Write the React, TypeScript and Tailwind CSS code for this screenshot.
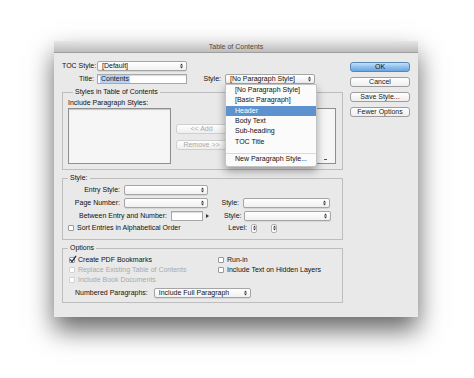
import React from 'react';

const Arrows = () => (
  <svg width="3" height="6" viewBox="0 0 3 6" className="shrink-0">
    <path d="M0 2.4 L1.5 0.4 L3 2.4Z M0 3.6 L1.5 5.6 L3 3.6Z" fill="#333" />
  </svg>
);

function Select({ w, children }: { w: string; children?: React.ReactNode }) {
  return (
    <div className={`flex h-[10px] items-center justify-between rounded-[2px] border border-[#a5a5a5] bg-gradient-to-b from-white to-[#f1f1f1] pl-[4px] pr-[3px] shadow-[0_0.5px_0.5px_rgba(0,0,0,0.15)] ${w}`}>
      <span className="truncate">{children}</span>
      <Arrows />
    </div>
  );
}

function Button({ children, primary, disabled }: { children: React.ReactNode; primary?: boolean; disabled?: boolean }) {
  if (primary)
    return (
      <div className="flex h-[10px] items-center justify-center rounded-[3px] border border-[#5a86b6] bg-gradient-to-b from-[#c4e0fa] via-[#8fc0ee] to-[#6ba5df] text-[#111]">
        {children}
      </div>
    );
  return (
    <div className={`flex h-[10px] items-center justify-center rounded-[3px] border bg-gradient-to-b from-white to-[#eeeeee] ${disabled ? 'border-[#cfcfcf] text-[#a9a9a9]' : 'border-[#9d9d9d] text-[#1a1a1a]'}`}>
      {children}
    </div>
  );
}

function Check({ checked, disabled, label }: { checked?: boolean; disabled?: boolean; label: string }) {
  return (
    <div className="flex h-[10px] items-center">
      <div className={`relative h-[6px] w-[6px] rounded-[1px] border bg-white ${disabled ? 'border-[#d3d3d3]' : 'border-[#999]'}`}>
        {checked && (
          <svg width="8" height="8" viewBox="0 0 8 8" className="absolute -left-[1px] -top-[3px]">
            <path d="M1.2 4.4 L3 6.6 L7 0.8" stroke="#1c2f55" strokeWidth="1.3" fill="none" />
          </svg>
        )}
      </div>
      <span className={`ml-[3px] ${disabled ? 'text-[#aaaaaa]' : ''}`}>{label}</span>
    </div>
  );
}

export default function App() {
  return (
    <div className="h-[378px] w-[474px] whitespace-nowrap bg-white pl-[54px] pt-[41px] font-['Liberation_Sans',Arial,sans-serif] text-[7px] leading-[8px] text-[#111]">
      <div className="w-[364px] bg-[#e9e9e9] shadow-[0_13px_24px_rgba(0,0,0,0.6)]">
        {/* title bar */}
        <div className="flex h-[12px] items-center justify-center border-b border-[#9e9e9e] bg-gradient-to-b from-[#e6e6e6] to-[#bdbdbd] text-[#4a4a4a]">
          Table of Contents
        </div>

        <div className="flex pb-[14px] pl-[8px] pt-[8px]">
          {/* LEFT COLUMN */}
          <div className="w-[281px]">
            <div className="flex h-[10px] items-center">
              <div className="w-[35px] pr-[3px] text-right">TOC Style:</div>
              <Select w="w-[90px]">[Default]</Select>
            </div>
            <div className="mt-[3px] flex h-[10px] items-center">
              <div className="w-[35px] pr-[3px] text-right">Title:</div>
              <div className="flex h-[10px] w-[90px] items-center border border-[#a8a8a8] bg-white pl-[2px] shadow-[inset_0_1px_1px_rgba(0,0,0,0.15)]">
                <span className="bg-[#b4d3f6] px-[1px] text-[#123]">Contents</span>
              </div>
              <div className="w-[38px] pr-[4px] text-right">Style:</div>
              <div className="relative z-10">
                <Select w="w-[90px]">[No Paragraph Style]</Select>
                {/* dropdown menu */}
                <div className="absolute left-0 top-full w-[92px] rounded-b-[3px] border border-[#c4c4c4] bg-[#fbfbfb] pb-[2px] shadow-[0_4px_8px_rgba(0,0,0,0.35)]">
                  {['[No Paragraph Style]', '[Basic Paragraph]', 'Header', 'Body Text', 'Sub-heading', 'TOC Title'].map((t) => (
                    <div
                      key={t}
                      className={`flex h-[10.3px] items-center pl-[9px] ${t === 'Header' ? 'bg-[#5d92ce] text-white' : ''}`}
                    >
                      {t}
                    </div>
                  ))}
                  <div className="mt-[6px] border-t border-[#dadada]" />
                  <div className="flex h-[10px] items-center pl-[9px]">New Paragraph Style...</div>
                </div>
              </div>
            </div>

            {/* Styles in Table of Contents */}
            <fieldset className="mt-[4px] border border-[#bdbdbd] pb-[5px] pl-[5px] pr-[6px]">
              <legend className="ml-[5px] px-[2px] leading-[8px]">Styles in Table of Contents</legend>
              <div className="pt-[3px]">Include Paragraph Styles:</div>
              <div className="mt-[1px] flex">
                <div className="h-[56px] w-[103px] border border-[#8f8f8f] bg-[#f6f6f6] shadow-[inset_0_1px_1px_rgba(0,0,0,0.2)]" />
                <div className="ml-[5px] w-[51px] pt-[16px]">
                  <Button disabled>&lt;&lt; Add</Button>
                  <div className="mt-[6px]">
                    <Button disabled>Remove &gt;&gt;</Button>
                  </div>
                </div>
                <div className="ml-[4px] flex h-[56px] w-[105px] items-end justify-end border border-[#8f8f8f] bg-[#f6f6f6] pb-[3px] pr-[8px]">
                  <div className="h-px w-[3px] bg-[#555]" />
                </div>
              </div>
            </fieldset>

            {/* Style */}
            <fieldset className="mt-[4px] border border-[#bdbdbd] pb-[6px]">
              <legend className="ml-[5px] px-[2px] leading-[8px]">Style:</legend>
              <div className="mt-[3px] flex h-[10px] items-center">
                <div className="w-[61px] pr-[4px] text-right">Entry Style:</div>
                <Select w="w-[84px]" />
              </div>
              <div className="mt-[3px] flex h-[10px] items-center">
                <div className="w-[61px] pr-[4px] text-right">Page Number:</div>
                <Select w="w-[84px]" />
                <div className="w-[35px] pr-[4px] text-right">Style:</div>
                <Select w="w-[87px]" />
              </div>
              <div className="mt-[3px] flex h-[10px] items-center">
                <div className="w-[108px] pr-[4px] text-right">Between Entry and Number:</div>
                <div className="h-[10px] w-[32px] border border-[#a8a8a8] bg-white shadow-[inset_0_1px_1px_rgba(0,0,0,0.15)]" />
                <div className="ml-[3px] w-[18px]">
                  <svg width="3" height="4" viewBox="0 0 3 4">
                    <path d="M0 0 L3 2 L0 4Z" fill="#333" />
                  </svg>
                </div>
                <div className="w-[20px] pr-[4px] text-right">Style:</div>
                <Select w="w-[87px]" />
              </div>
              <div className="mt-[2px] flex h-[10px] items-center">
                <div className="w-[160px] pl-[5px]">
                  <Check label="Sort Entries in Alphabetical Order" />
                </div>
                <div className="w-[28px] pr-[4px] text-right">Level:</div>
                <div className="flex h-[10px] w-[28px] items-center justify-between">
                  <div className="flex h-[9px] w-[6px] items-center justify-center rounded-[2px] border border-[#b0b0b0] bg-white">
                    <Arrows />
                  </div>
                  <div className="mr-[2px] flex h-[9px] w-[6px] items-center justify-center rounded-[2px] border border-[#b0b0b0] bg-white">
                    <Arrows />
                  </div>
                </div>
              </div>
            </fieldset>

            {/* Options */}
            <fieldset className="mt-[4px] border border-[#bdbdbd] pb-[4px]">
              <legend className="ml-[5px] px-[2px] leading-[8px]">Options</legend>
              <div className="mt-[3px] flex">
                <div className="w-[155px] pl-[6px]">
                  <Check checked label="Create PDF Bookmarks" />
                  <Check disabled label="Replace Existing Table of Contents" />
                  <Check disabled label="Include Book Documents" />
                </div>
                <div>
                  <Check label="Run-in" />
                  <Check label="Include Text on Hidden Layers" />
                </div>
              </div>
              <div className="mt-[3px] flex h-[10px] items-center pl-[12px]">
                <span>Numbered Paragraphs:</span>
                <div className="ml-[6px]">
                  <Select w="w-[97px]">Include Full Paragraph</Select>
                </div>
              </div>
            </fieldset>
          </div>

          {/* RIGHT COLUMN */}
          <div className="ml-[7px] flex w-[60px] flex-col gap-[5px] pt-[1px]">
            <Button primary>OK</Button>
            <Button>Cancel</Button>
            <Button>Save Style...</Button>
            <Button>Fewer Options</Button>
          </div>
        </div>
      </div>
    </div>
  );
}
